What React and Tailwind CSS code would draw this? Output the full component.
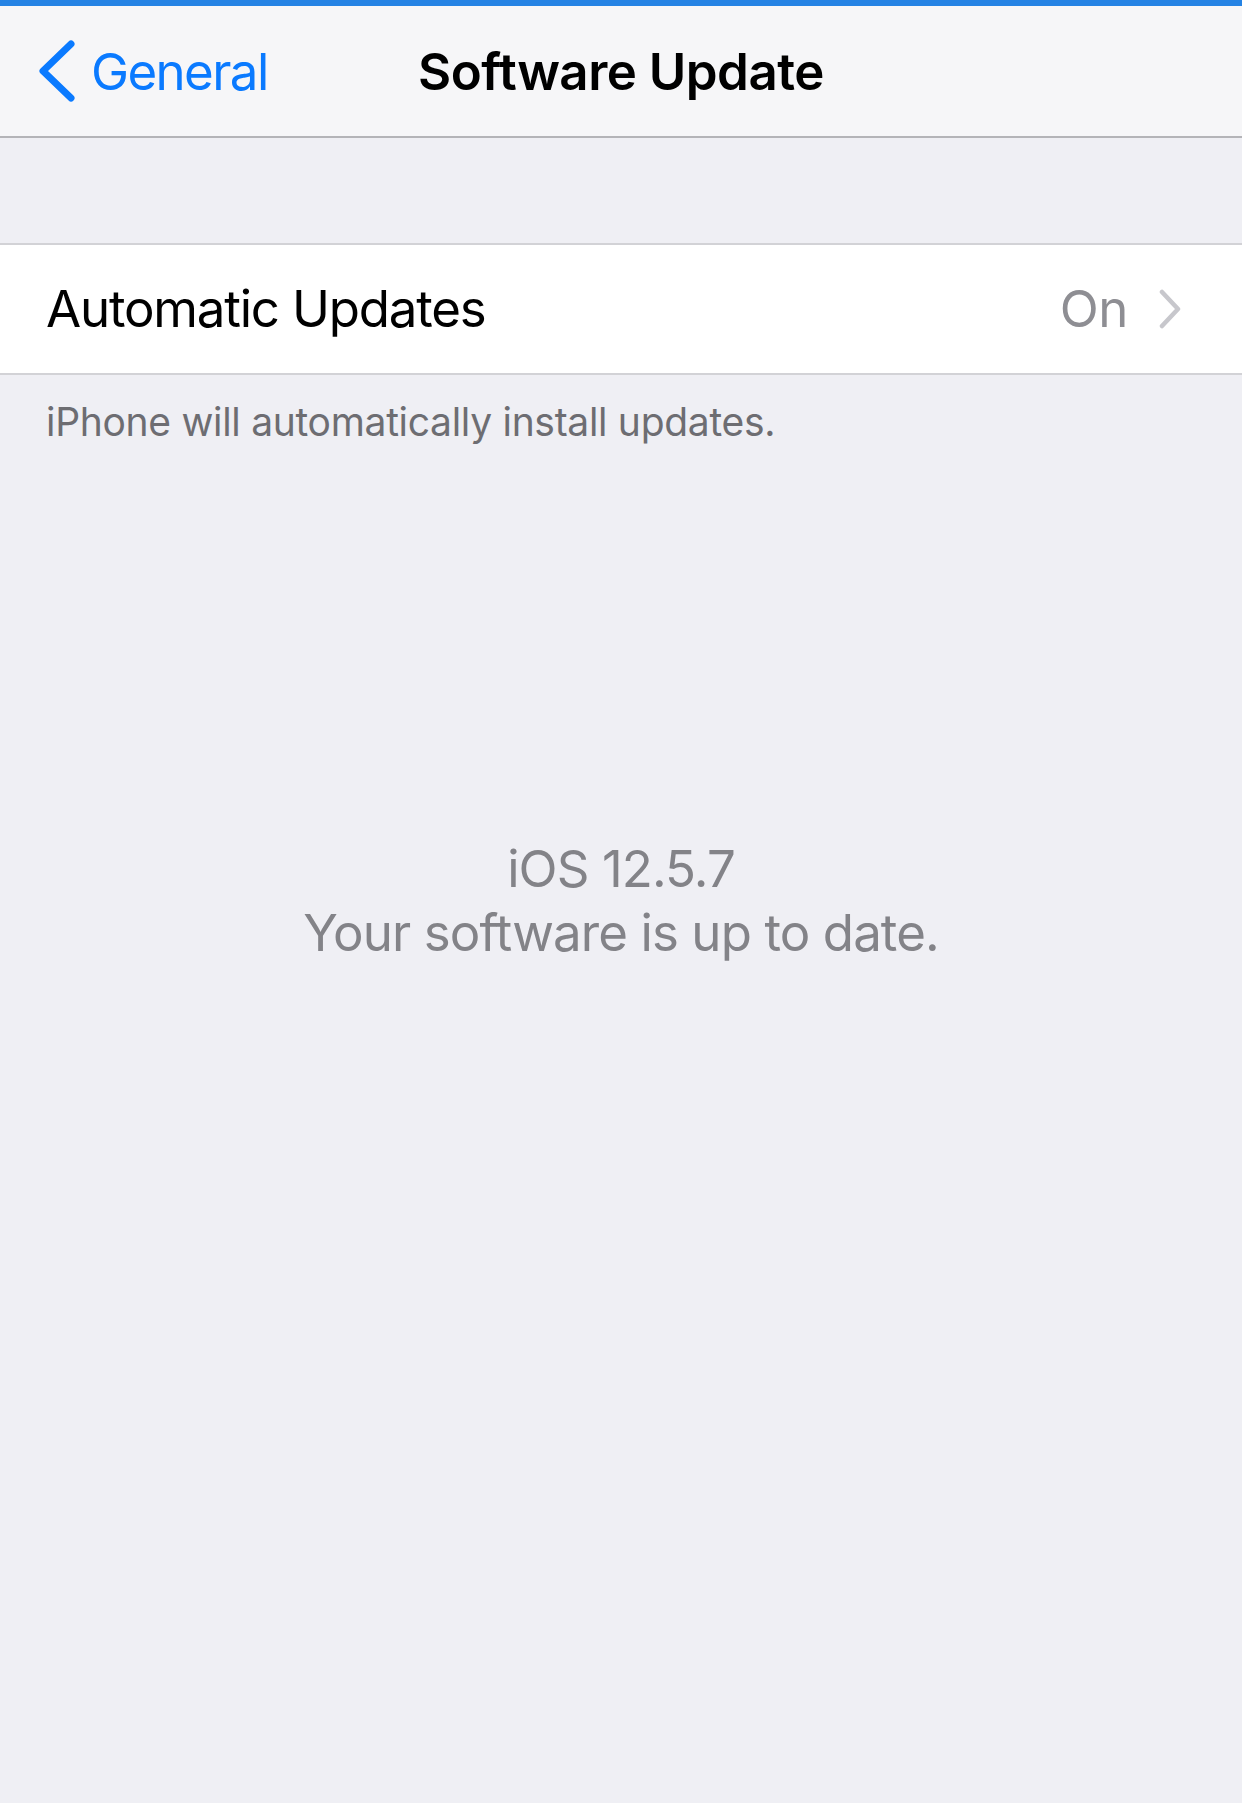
import React from 'react';

function BackChevron() {
  return (
    <svg width="38" height="62" viewBox="0 0 38 62" fill="none" className="shrink-0">
      <path d="M33 4 L5 31 L33 58" stroke="#0a7aff" strokeWidth="7" strokeLinecap="round" strokeLinejoin="round" />
    </svg>
  );
}

function RowChevron() {
  return (
    <svg width="24" height="40" viewBox="0 0 24 40" fill="none">
      <path d="M4 3 L20 20 L4 37" stroke="#c7c7cc" strokeWidth="4.5" strokeLinecap="round" strokeLinejoin="round" />
    </svg>
  );
}

export default function App() {
  return (
    <div className="min-h-[1803px] w-[1242px] bg-[#efeff4] font-['Inter','Liberation_Sans',sans-serif] antialiased">
      {/* status strip */}
      <div className="h-[6px] bg-[#2583e4]" />

      {/* navigation bar */}
      <header className="h-[132px] bg-[#f6f6f8] border-b-2 border-[#b4b4b8] grid grid-cols-[1fr_auto_1fr] items-center">
        <button className="flex items-center gap-[15px] pl-[38px] text-left">
          <BackChevron />
          <span className="text-[51px] text-[#0a7aff] tracking-[-1.6px] leading-none">General</span>
        </button>
        <h1 className="text-[51px] font-semibold text-black tracking-[-0.5px] leading-none">Software Update</h1>
        <div />
      </header>

      <div className="h-[105px]" />

      {/* settings group */}
      <div className="h-[132px] bg-white border-y-2 border-[#d2d2d6] flex items-center justify-between pl-[46px] pr-[60px]">
        <span className="text-[51px] text-black tracking-[-1.2px]">Automatic Updates</span>
        <div className="flex items-center gap-[30px]">
          <span className="text-[51px] text-[#8e8e93] tracking-[-0.5px]">On</span>
          <RowChevron />
        </div>
      </div>
      <p className="pl-[46px] pt-[23px] text-[39px] text-[#6d6d72] leading-[47px] tracking-[-0.3px]">iPhone will automatically install updates.</p>

      {/* version status */}
      <div className="mt-[392px] flex flex-col items-center text-[51px] leading-[64px] text-[#838388] tracking-[-0.9px]">
        <span>iOS 12.5.7</span>
        <span>Your software is up to date.</span>
      </div>
    </div>
  );
}
